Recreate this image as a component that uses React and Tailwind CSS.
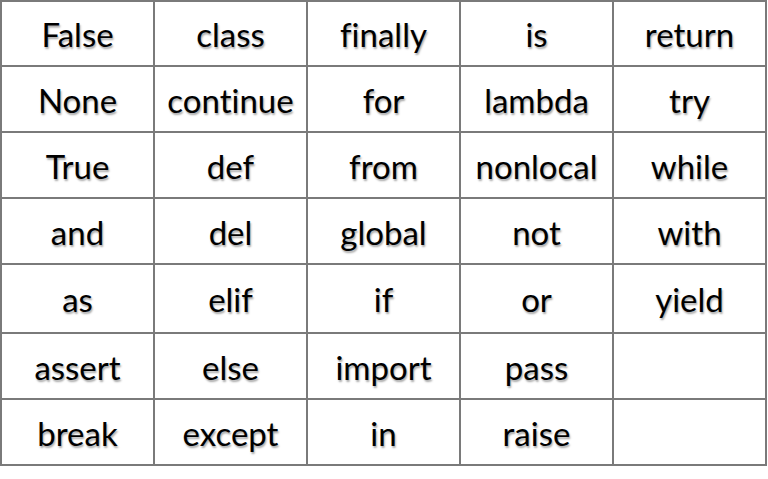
const rows = [
  ["False", "class", "finally", "is", "return"],
  ["None", "continue", "for", "lambda", "try"],
  ["True", "def", "from", "nonlocal", "while"],
  ["and", "del", "global", "not", "with"],
  ["as", "elif", "if", "or", "yield"],
  ["assert", "else", "import", "pass", ""],
  ["break", "except", "in", "raise", ""],
];

export default function App() {
  return (
    <div className="w-[768px] h-[479px] bg-white font-['Lato','Carlito',sans-serif] text-black">
      <div className="grid w-[767px] grid-cols-[repeat(5,153px)] grid-rows-[65px_66px_66px_66px_69px_66px_66px] border-l-2 border-t-2 border-[#7a7a7a]">
        {rows.flat().map((word, i) => (
          <div
            key={i}
            className="flex items-center justify-center border-r-2 border-b-2 border-[#7a7a7a] pt-[2px] text-[33px] leading-none [font-variant-ligatures:none] [text-shadow:1px_2px_2px_rgba(0,0,0,0.35)]"
          >
            {word}
          </div>
        ))}
      </div>
    </div>
  );
}
